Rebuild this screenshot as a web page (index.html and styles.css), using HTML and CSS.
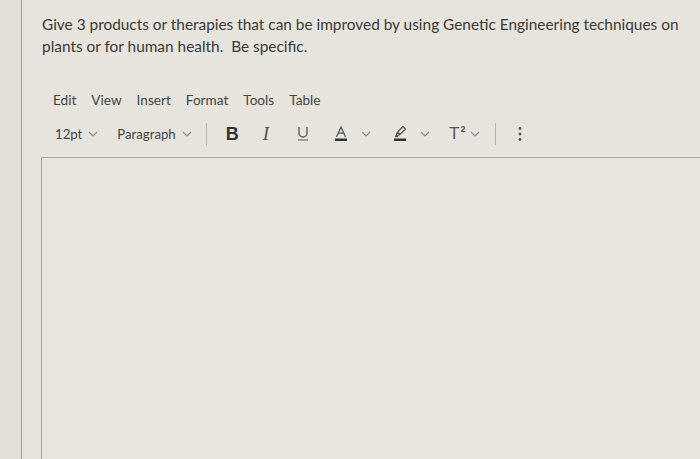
FILE: index.html
```html
<!DOCTYPE html>
<html>
<head>
	<title>Essay question</title>
	<meta name="viewport" content="width=device-width">
	<link rel="stylesheet" href="styles.css">
</head>
<body>
	<div class="page">
		<div class="rail"></div>
		<div class="main">
			<p class="prompt">Give 3 products or therapies that can be improved by using Genetic Engineering techniques on plants or for human health.&nbsp; Be specific.</p>

			<div class="menubar">
				<span class="menu-item">Edit</span>
				<span class="menu-item">View</span>
				<span class="menu-item">Insert</span>
				<span class="menu-item">Format</span>
				<span class="menu-item">Tools</span>
				<span class="menu-item">Table</span>
			</div>

			<div class="toolbar">
				<span class="tool select size">12pt <svg class="chev" viewBox="0 0 10 6"><path d="M1 1l4 4 4-4"/></svg></span>
				<span class="tool select para">Paragraph <svg class="chev" viewBox="0 0 10 6"><path d="M1 1l4 4 4-4"/></svg></span>
				<span class="sep"></span>
				<span class="tool bold">B</span>
				<span class="tool italic">I</span>
				<span class="tool under">
					<svg class="icon" viewBox="0 0 14 16"><path d="M3 1v6a4 4 0 0 0 8 0V1" fill="none"/><path class="bar" d="M2 14h10"/></svg>
				</span>
				<span class="tool color">
					<svg class="icon" viewBox="0 0 14 16"><path d="M2.5 11L7 1l4.5 10M4.3 7.2h5.4" fill="none"/><rect class="fill" x="1" y="12.5" width="12" height="2.5"/></svg>
					<svg class="chev" viewBox="0 0 10 6"><path d="M1 1l4 4 4-4"/></svg>
				</span>
				<span class="tool color">
					<svg class="icon" viewBox="0 0 14 16"><path d="M3 10l1.5-4 5.5-5.5 2.5 2.5-5.5 5.5zM4.5 6l2.5 2.5M2 10.5h3" fill="none"/><rect class="fill" x="1" y="12.5" width="12" height="2.5"/></svg>
					<svg class="chev" viewBox="0 0 10 6"><path d="M1 1l4 4 4-4"/></svg>
				</span>
				<span class="tool sup"><span class="sup-label">T<sup>2</sup></span> <svg class="chev" viewBox="0 0 10 6"><path d="M1 1l4 4 4-4"/></svg></span>
				<span class="sep"></span>
				<span class="tool more">
					<svg viewBox="0 0 4 16"><circle cx="2" cy="2.5" r="1.4"/><circle cx="2" cy="8" r="1.4"/><circle cx="2" cy="13.5" r="1.4"/></svg>
				</span>
			</div>

			<div class="editor"></div>
		</div>
	</div>
</body>
</html>
```

FILE: styles.css
```css
html, body{
	margin: 0;
	height: 100%;
	background: #e6e4dd;
	font-family: Lato, "Liberation Sans", sans-serif;
	color: #3b3b3a;
}

.page{
	display: flex;
	height: 100%;
}

.rail{
	width: 21px;
	flex: none;
	background: #e1dfd8;
	border-right: 1px solid #9d9c97;
}

.main{
	flex: 1;
	display: flex;
	flex-direction: column;
	padding-left: 19px;
	min-width: 0;
}

.prompt{
	margin: 13px 0 0 1px;
	padding-right: 10px;
	font-size: 15.4px;
	line-height: 22px;
}

.menubar{
	display: flex;
	gap: 15px;
	margin-top: 35px;
	padding-left: 12px;
	font-size: 13.6px;
	color: #444;
}

.toolbar{
	display: flex;
	align-items: center;
	height: 28px;
	margin-top: 12px;
	padding-left: 14px;
	font-size: 13.2px;
	color: #444;
}

.tool{
	display: flex;
	align-items: center;
	margin-right: 22px;
}

.select .chev{
	margin-left: 6px;
}

.size{
	margin-right: 19px;
}

.para{
	margin-right: 14px;
}

.sep{
	width: 1px;
	height: 22px;
	background: #b3b2ac;
	margin-right: 19px;
}

.chev{
	width: 10px;
	height: 6px;
	fill: none;
	stroke: #888;
	stroke-width: 1.2;
}

.bold{
	font-family: "Liberation Sans", sans-serif;
	font-weight: bold;
	font-size: 18px;
	color: #333;
	margin-right: 24px;
}

.italic{
	font-family: "Liberation Serif", serif;
	font-style: italic;
	font-size: 19px;
	color: #555;
	margin-right: 27px;
}

.under{
	margin-right: 24px;
}

.icon{
	width: 14px;
	height: 16px;
	stroke: #555;
	stroke-width: 1.3;
}

.icon .bar{
	stroke: #888;
	stroke-width: 1.5;
}

.icon .fill{
	fill: #333;
	stroke: none;
}

.color .chev{
	margin-left: 13px;
}

.color + .sup{
	margin-left: -3px;
}

.sup{
	font-family: "Liberation Sans", sans-serif;
	font-size: 17px;
	color: #555;
	margin-right: 15px;
}

.sup sup{
	font-size: 9px;
	font-weight: bold;
	margin-left: 1px;
	vertical-align: 7px;
}

.sup .chev{
	margin-left: 5px;
}

.more{
	margin-left: 3px;
}

.more svg{
	width: 4px;
	height: 16px;
	fill: #555;
}

.editor{
	flex: 1;
	margin-top: 9px;
	border-top: 1px solid #a9a8a2;
	border-left: 1px solid #a9a8a2;
	background: #e7e5de;
}
```
